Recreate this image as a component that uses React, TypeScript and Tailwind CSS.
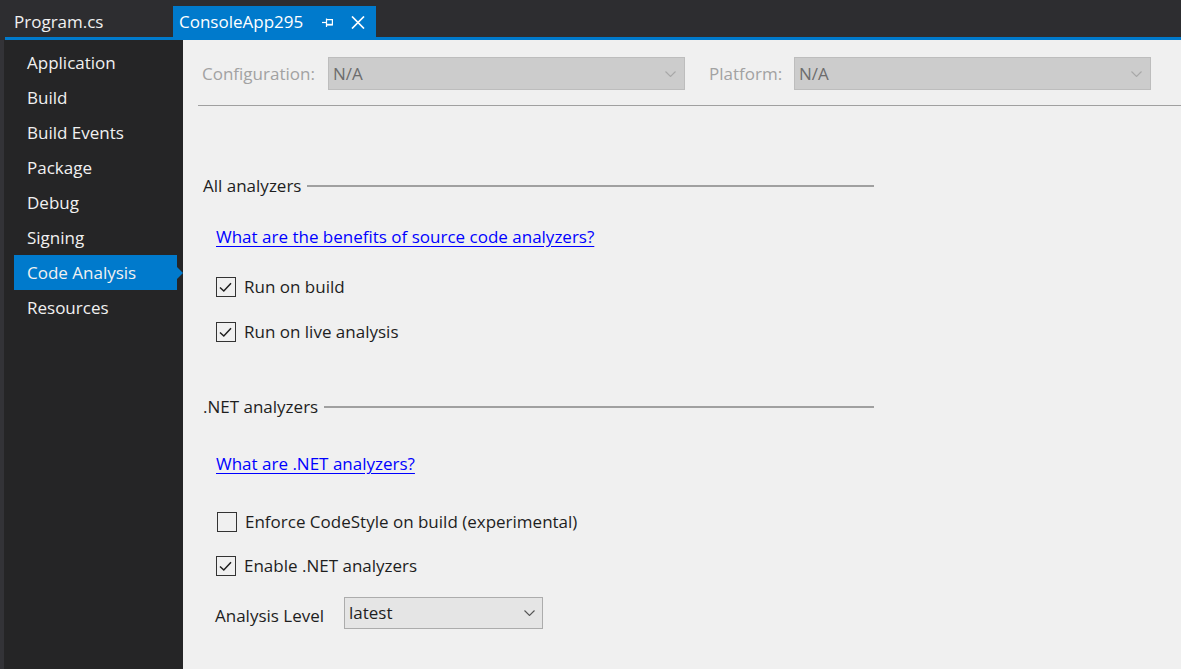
import React from "react";

const font = { fontFamily: '"Segoe UI", "Open Sans", "Noto Sans", sans-serif' };

function Chevron({ color }: { color: string }) {
  return (
    <svg width="11" height="6" viewBox="0 0 11 6" fill="none">
      <polyline points="0.5,0.5 5.5,5.5 10.5,0.5" stroke={color} strokeWidth="1.1" />
    </svg>
  );
}

function Check() {
  return (
    <svg width="20" height="20" viewBox="0 0 20 20" className="absolute left-[-1px] top-[-1px]">
      <polyline points="4,10.5 7.8,14 15,6.3" fill="none" stroke="#1e1e1e" strokeWidth="1.5" />
    </svg>
  );
}

function CheckRow({ label, checked, className }: { label: string; checked: boolean; className: string }) {
  return (
    <div className={`flex items-center h-[24px] ${className}`}>
      <div className="relative w-[20px] h-[20px] border border-[#333333] bg-[#f0f0f0]">{checked && <Check />}</div>
      <span className="ml-[8px] text-[#1e1e1e]">{label}</span>
    </div>
  );
}

function Section({ title, className }: { title: string; className: string }) {
  return (
    <div className={`flex items-center w-[671px] h-[24px] ml-[5px] ${className}`}>
      <span className="text-[#1e1e1e] whitespace-nowrap">{title}</span>
      <div className="flex-1 h-[2px] bg-[#a0a0a0] ml-[6px]" />
    </div>
  );
}

export default function App() {
  const items = ["Application", "Build", "Build Events", "Package", "Debug", "Signing", "Code Analysis", "Resources"];
  return (
    <div className="w-[1181px] h-[669px] flex flex-col bg-[#2d2d30] overflow-hidden text-[17px] leading-[24px]" style={font}>
      {/* Tab bar */}
      <div className="h-[37px] flex items-end shrink-0">
        <div className="h-[31px] w-[173px] flex items-center pl-[14px] text-[#f1f1f1]">Program.cs</div>
        <div className="h-[31px] w-[203px] flex items-center pl-[6px] bg-[#007acc] text-white">
          <span>ConsoleApp295</span>
          <svg width="11" height="11" viewBox="0 0 11 11" className="ml-[19px] mt-[2px]" fill="none">
            <path d="M0 5.5H4.5" stroke="#fff" strokeWidth="1.2" />
            <path d="M4.5 1.5V10" stroke="#fff" strokeWidth="1.2" />
            <path d="M4.5 2.6H10.4V7.9H4.5" stroke="#fff" strokeWidth="1.2" />
            <path d="M5 7.5H10.4" stroke="#fff" strokeWidth="1.4" />
          </svg>
          <svg width="14" height="13" viewBox="0 0 14 13" className="ml-[18px] mt-[1px]" fill="none">
            <path d="M1 0.5L13 12.5M13 0.5L1 12.5" stroke="#fff" strokeWidth="1.7" />
          </svg>
        </div>
      </div>
      <div className="h-[3px] ml-[5px] bg-[#007acc] shrink-0" />
      {/* Body */}
      <div className="flex flex-1 min-h-0">
        <div className="w-[183px] shrink-0 bg-[#252526] border-l-[4px] border-[#333337] pt-[5px] flex flex-col">
          {items.map((it) => {
            const sel = it === "Code Analysis";
            return (
              <div key={it} className="relative h-[35px] flex items-center ml-[10px] w-[163px]">
                <div className={`h-full w-full flex items-center pl-[13px] text-[#f1f1f1] ${sel ? "bg-[#007acc]" : ""}`}>{it}</div>
                {sel && (
                  <div className="absolute left-[163px] top-[12px] w-0 h-0 border-t-[6px] border-b-[6px] border-l-[6px] border-t-transparent border-b-transparent border-l-[#007acc]" />
                )}
              </div>
            );
          })}
        </div>
        <div className="flex-1 bg-[#f0f0f0] pl-[15px] flex flex-col">
          {/* config row */}
          <div className="flex items-center mt-[17px] h-[33px] pl-[4px]">
            <span className="w-[126px] text-[#a2a2a2]">Configuration:</span>
            <div className="w-[357px] h-[33px] bg-[#cccccc] border border-[#bdbdbd] flex items-center justify-between pl-[4px] pr-[8px]">
              <span className="text-[#6d6d6d]">N/A</span>
              <Chevron color="#a8a8a8" />
            </div>
            <span className="w-[85px] ml-[24px] text-[#a2a2a2]">Platform:</span>
            <div className="w-[357px] h-[33px] bg-[#cccccc] border border-[#bdbdbd] flex items-center justify-between pl-[4px] pr-[8px]">
              <span className="text-[#6d6d6d]">N/A</span>
              <Chevron color="#a8a8a8" />
            </div>
          </div>
          <div className="h-px bg-[#a0a0a0] mt-[15px]" />

          <Section title="All analyzers" className="mt-[68px]" />
          <div className="ml-[18px] mt-[27px] h-[24px]">
            <span className="text-[#0000ff] underline underline-offset-[3px]">What are the benefits of source code analyzers?</span>
          </div>
          <CheckRow label="Run on build" checked className="ml-[18px] mt-[26px]" />
          <CheckRow label="Run on live analysis" checked className="ml-[18px] mt-[21px]" />

          <Section title=".NET analyzers" className="mt-[51px]" />
          <div className="ml-[18px] mt-[33px] h-[24px]">
            <span className="text-[#0000ff] underline underline-offset-[3px]">What are .NET analyzers?</span>
          </div>
          <CheckRow label="Enforce CodeStyle on build (experimental)" checked={false} className="ml-[19px] mt-[34px]" />
          <CheckRow label="Enable .NET analyzers" checked className="ml-[18px] mt-[20px]" />

          <div className="flex items-center ml-[17px] mt-[19px] h-[32px]">
            <span className="w-[129px] text-[#1e1e1e] mt-[5px]">Analysis Level</span>
            <div className="w-[199px] h-[32px] bg-[#e5e5e5] border border-[#acacac] flex items-center justify-between pl-[4px] pr-[7px]">
              <span className="text-[#1e1e1e]">latest</span>
              <Chevron color="#555555" />
            </div>
          </div>
        </div>
      </div>
    </div>
  );
}
